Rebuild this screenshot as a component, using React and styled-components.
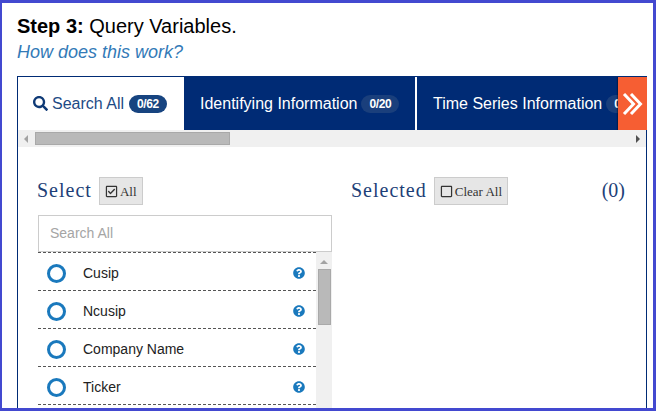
import React from 'react';
import styled, { createGlobalStyle } from 'styled-components';
import { FaSearch, FaRegCheckSquare, FaRegSquare, FaQuestionCircle } from 'react-icons/fa';

const Global = createGlobalStyle`
  html, body { margin: 0; padding: 0; background: #fff; }
  body { font-family: "Liberation Sans", Arial, sans-serif; }
`;
const Frame = styled.div`
  box-sizing: border-box; width: 656px; height: 411px; overflow: hidden;
  border-style: solid; border-color: #4349d0; border-width: 3px 3px 3px 2px;
  padding: 12px 7px 0 15px; background: #fff;
`;
const Title = styled.h1`
  margin: 0; font-size: 20px; line-height: 22px; font-weight: 400; color: #000;
  b { font-weight: 700; }
`;
const Help = styled.a`
  display: block; margin-top: 5px; font-size: 18px; line-height: 20px; font-style: italic; color: #337ab7;
`;
const Panel = styled.div`
  margin-top: 14px; border: solid #002b75; border-width: 1px 1px 0 1px; width: 630px; box-sizing: border-box; height: 400px;
`;
const TabBar = styled.div`
  position: relative; height: 53px; display: flex; overflow: hidden; background: #002b75; margin: 0 -1px 0 0;
`;
const Tab = styled.div`
  flex: none; box-sizing: border-box; width: ${p => p.$w}px; display: flex; align-items: center;
  padding-left: ${p => p.$pad}px; gap: 4px; font-size: 16px; white-space: nowrap;
  background: ${p => (p.$active ? '#fff' : '#002b75')}; color: ${p => (p.$active ? '#1d4a85' : '#fff')};
  border-right: ${p => (p.$sep ? '2px solid #fff' : '0')};
`;
const SearchGlyph = styled(FaSearch)` font-size: 15px; color: #0f3a76; `;
const Badge = styled.span`
  font-size: 12px; font-weight: 700; line-height: 18px; padding: 0 8px; border-radius: 9px;
  margin-left: ${p => (p.$active ? '1px' : '0')};
  color: #fff; background: ${p => (p.$active ? '#174480' : '#1a3f7c')};
  letter-spacing: -0.4px;
`;
const More = styled.div`
  position: absolute; top: 0; right: 0; width: 29px; height: 54px; background: #f65e33;
  display: flex; align-items: center; justify-content: center;
  box-shadow: -1px 0 1px rgba(0,0,0,.3);
`;
const HBar = styled.div`
  height: 17px; background: #f0f0f0; display: flex; align-items: center;
`;
const ArrowLeft = styled.i`
  width: 0; height: 0; margin: 0 7px 0 6px; border-style: solid; border-width: 4px 4px 4px 0; border-color: transparent #a3a3a3 transparent transparent;
`;
const HThumb = styled.div`
  box-sizing: border-box; width: 195px; height: 13px; background: #b9b9b9; border: 1px solid #a9a9a9;
`;
const ArrowRight = styled.i`
  width: 0; height: 0; margin: 0 6px 0 auto; border-style: solid; border-width: 4px 0 4px 4px; border-color: transparent transparent transparent #505050;
`;
const Columns = styled.div`
  display: grid; grid-template-columns: 314px 1fr; padding: 30px 21px 0 19px;
`;
const Head = styled.div`
  display: flex; align-items: center; height: 28px; gap: 7px;
`;
const HeadText = styled.span`
  font-family: "Liberation Serif", "DejaVu Serif", serif; font-size: 20px; letter-spacing: 1px; color: #1d3f78;
  padding-bottom: 2px;
`;
const Count = styled(HeadText)` margin-left: auto; letter-spacing: 0; `;
const SmallBtn = styled.button`
  box-sizing: border-box; height: 28px; padding: 0 5px; background: #e6e6e6; border: 1px solid #ccc; border-radius: 0;
  display: flex; align-items: center; gap: 2px; color: #333;
  font-family: "Liberation Serif", serif; font-size: 13px; line-height: 1;
`;
const SearchBox = styled.div`
  box-sizing: border-box; width: 294px; height: 37px; margin: 10px 0 0 1px; border: 1px solid #ccc;
  padding: 0 0 2px 11px; display: flex; align-items: center; font-size: 14px; color: #a5a5a5;
`;
const ListWrap = styled.div`
  display: flex; width: 294px; margin-left: 1px;
`;
const List = styled.div`
  flex: 1; border-top: 1px dashed #555;
`;
const Row = styled.div`
  box-sizing: border-box; height: 38px; display: flex; align-items: center; border-bottom: 1px dashed #555;
  font-size: 14px; color: #222; padding: 2px 11px 0 9px;
`;
const Radio = styled.span`
  box-sizing: border-box; width: 19px; height: 19px; border-radius: 50%; border: 3px solid #1a79bd; margin: 1px 17px 0 0; flex: none;
`;
const Label = styled.span` flex: 1; `;
const Q = styled(FaQuestionCircle)` font-size: 12px; color: #1a79bd; `;
const VBar = styled.div`
  width: 16px; background: #f0f0f0; display: flex; flex-direction: column; align-items: center; flex: none;
`;
const ArrowUp = styled.i`
  width: 0; height: 0; margin: 8px 0 5px; border-style: solid; border-width: 0 4px 4px; border-color: transparent transparent #a3a3a3;
`;
const VThumb = styled.div`
  box-sizing: border-box; width: 13px; height: 56px; background: #b9b9b9; border: 1px solid #a9a9a9;
`;

const items = ['Cusip', 'Ncusip', 'Company Name', 'Ticker'];

export default function App() {
  return (
    <Frame>
      <Global />
      <Title><b>Step 3:</b> Query Variables.</Title>
      <Help>How does this work?</Help>
      <Panel>
        <TabBar>
          <Tab $active $w={166} $pad={15}><SearchGlyph />Search All <Badge $active>0/62</Badge></Tab>
          <Tab $w={233} $pad={16} $sep>Identifying Information<Badge>0/20</Badge></Tab>
          <Tab $w={260} $pad={16}>Time Series Information<Badge>0/12</Badge></Tab>
          <More>
            <svg width="21" height="22" viewBox="0 0 21 22" fill="none" stroke="#fff" strokeWidth="3">
              <path d="M2 1l9.5 10L2 21" />
              <path d="M9 1l9.5 10L9 21" />
            </svg>
          </More>
        </TabBar>
        <HBar><ArrowLeft /><HThumb /><ArrowRight /></HBar>
        <Columns>
          <div>
            <Head><HeadText>Select</HeadText><SmallBtn><FaRegCheckSquare />All</SmallBtn></Head>
            <SearchBox>Search All</SearchBox>
            <ListWrap>
              <List>
                {items.map(t => (
                  <Row key={t}><Radio /><Label>{t}</Label><Q /></Row>
                ))}
                <Row />
              </List>
              <VBar><ArrowUp /><VThumb /></VBar>
            </ListWrap>
          </div>
          <div>
            <Head><HeadText>Selected</HeadText><SmallBtn><FaRegSquare />Clear All</SmallBtn><Count>(0)</Count></Head>
          </div>
        </Columns>
      </Panel>
    </Frame>
  );
}
